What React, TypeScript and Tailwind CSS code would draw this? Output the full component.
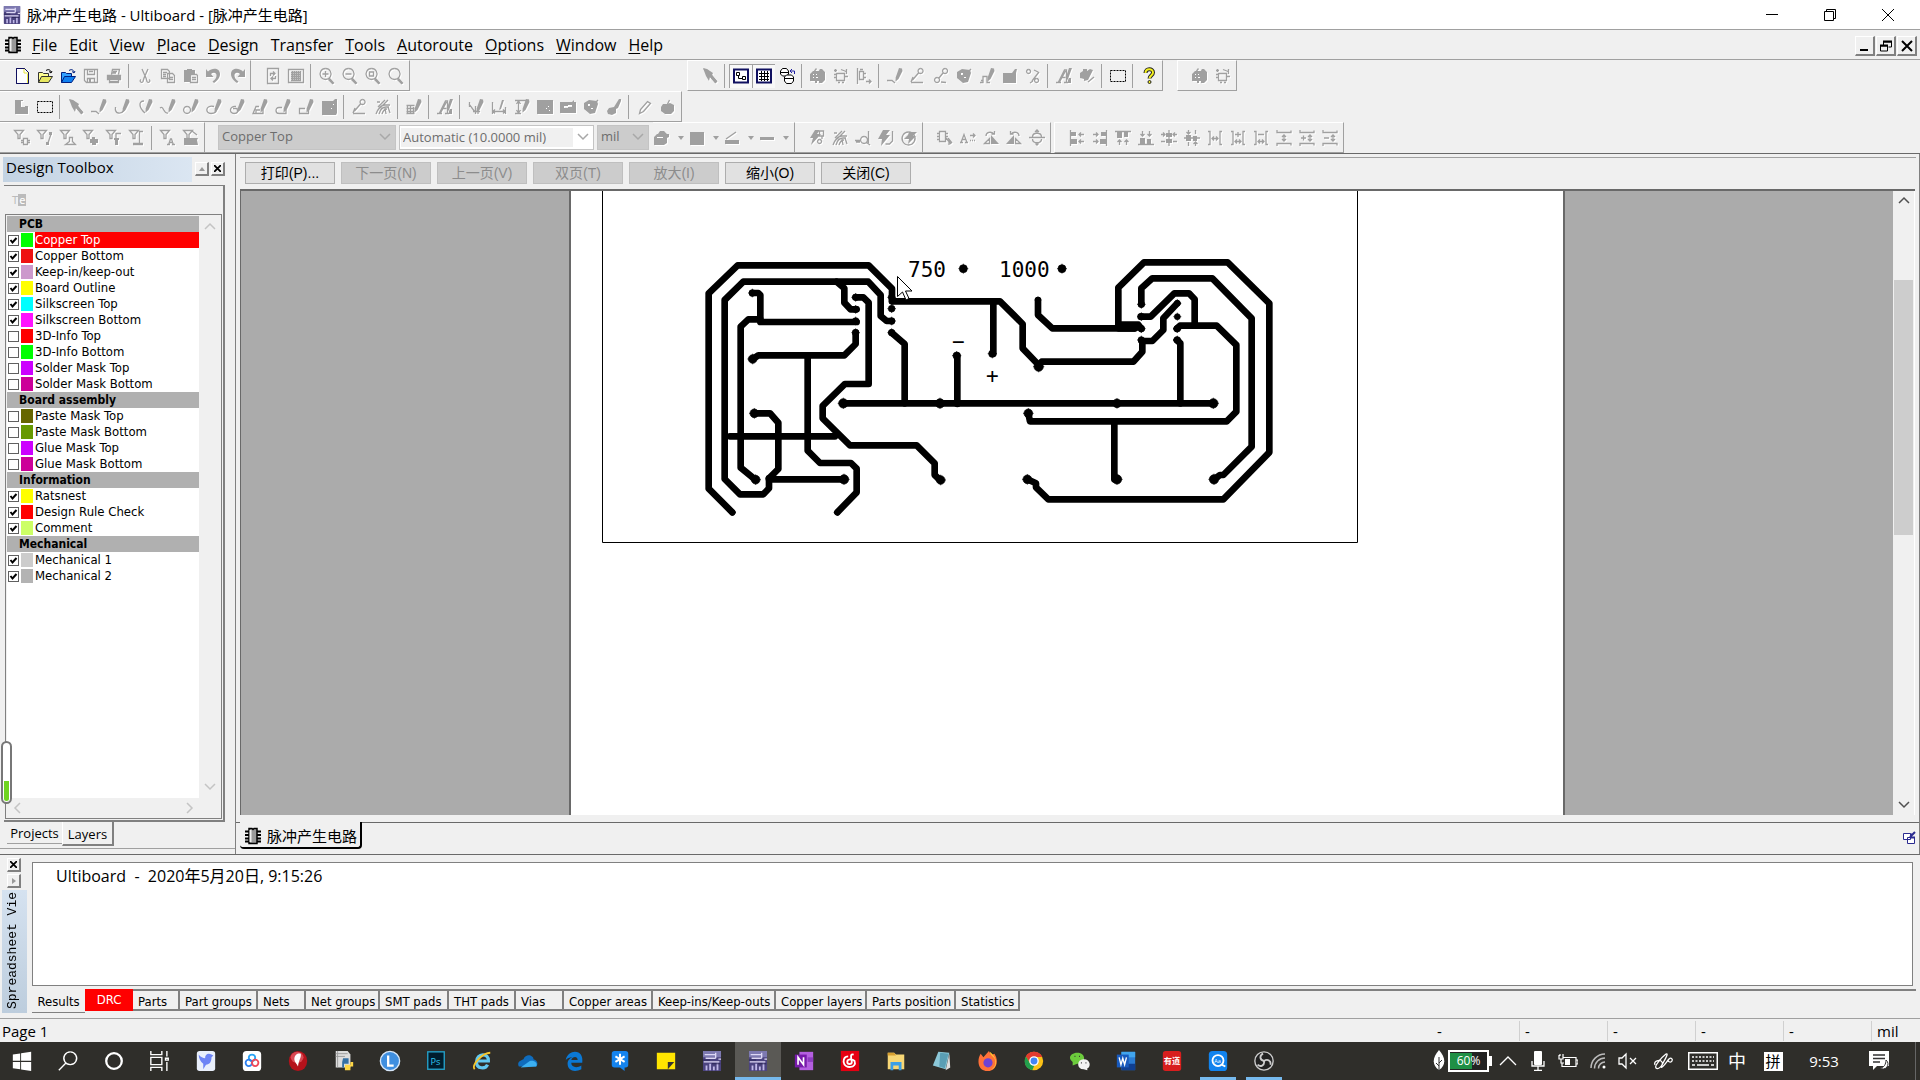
import { ReactNode } from "react";
import clsx from "clsx";

const UI = "font-['Open_Sans','Noto_Sans_CJK_SC',sans-serif]";
const TAHOMA = "font-['DejaVu_Sans_Condensed','DejaVu_Sans',sans-serif]";

// s = stroked outline, f = filled shape, both on a 16x16 grid
type Glyph = { s?: string; f?: string };

const PEN = "M12 0l3 .5 .5 2.500-4 8-3 2.500 .2-4z";
const FUNNEL = "M.5 .5h9l-3.500 4v4h-2v-4z";

const glyphs: Record<string, Glyph> = {
  save: { s: "M1.500 1.500h13v13h-11l-2-2zM4.500 1.500v5h7v-5M4.500 14.500v-4h7v4M6 3.500h4", f: "M6 11h2v3h-2z" },
  print: { s: "M5.500 6.500l1-5h7l-1 5M1.500 7.500h13v4h-13zM3.500 11.500v3h9v-3M7 3.500h4M6 5h4", f: "M2 8h12v3h-12zM4 13h8v1h-8z" },
  cut: { s: "M5 1l4 9M11 1l-4 9M4 11.500a1.500 1.500 0 1 0 2 2l1-3.500M12 11.500a1.500 1.500 0 1 1-2 2l-1-3.500" },
  copy: { s: "M1.500 1.500h6l2 2v7h-8zM7.500 5.500h5l2 2v7h-7zM3 4.500h4M3 6.500h3M3 8.500h3M9 9.500h4M9 11.500h4" },
  paste: { s: "M7.500 6.500h6l1 1v7h-7zM9 9.500h4M9 11.500h4", f: "M1 2h3v-1h5v1h3v4h-5v8h-6z" },
  undo: { f: "M0 1l2 2.500c5-4.500 12-3 12 2.500 0 4-3 7-6 9l-1.500-1.500c3-2 4-4 4-6 0-3-3-3.500-5.500-1.500l2.500 3h-7.500z" },
  redo: { f: "M16 1l-2 2.500c-5-4.500-12-3-12 2.500 0 4 3 7 6 9l1.500-1.500c-3-2-4-4-4-6 0-3 3-3.500 5.500-1.500l-2.500 3h7.500z" },
  refreshDoc: { s: "M2.500 .5h11v15h-11zM5.500 8v-2.500h4M8 3.500l2 2-2 2M10.500 8v2.500h-4M8 8.500l-2 2 2 2" },
  gridDoc: { s: "M.5 1.500h15v13h-15zM3 4.500h10M3 6.500h10M3 8.500h10M3 10.500h10M3 12.500h10M4.500 3v10M6.500 3v10M8.500 3v10M10.500 3v10M12.500 3v10" },
  zoomIn: { s: "M6.500 .5a5.500 5.500 0 1 0 .1 0M10.500 10.500l4.500 5M9.500 11.500l4.500 4.500M3.500 6h6M6.500 3v6" },
  zoomOut: { s: "M6.500 .5a5.500 5.500 0 1 0 .1 0M10.500 10.500l4.500 5M9.500 11.500l4.500 4.500M3.500 6h6" },
  zoomBox: { s: "M6.500 .5a5.500 5.500 0 1 0 .1 0M10.500 10.500l4.500 5M9.500 11.500l4.500 4.500M4.500 4h4v4h-4z" },
  zoom: { s: "M6.500 .5a5.500 5.500 0 1 0 .1 0M10.500 10.500l4.500 5M9.500 11.500l4.500 4.500" },
  arrow: { s: "M2 1l12 14M5 2l10 12M7 3.500l3 3", f: "M1 0l4 1 6 4-1 2 5 6-2 2-5-6-1 4-3-5z" },
  chip3d: { s: "M4.500 3l2-2.500M9.500 2l3 1", f: "M0 6l3-3h6l1-2h2l3 3v8l-3 3h-3v-2h-2v2h-2v-2h-5zM3 6v1h1v-1zM6 6v1h1v-1zM3 9v1h1v-1zM6 9v1h2v-1z" },
  chipCorner: { s: "M3.500 5.500h8v7h-8zM1 6.500h2M1 9.500h2M12 8.500h3M5 14.500h2M9 14.500h2M2.500 1v3M1 2.500h3M8 1.500l5 2M13.500 1v5" },
  alignChip: { s: "M1.500 0v16M3.500 3.500h4v8h-4zM8 5.500h2M8 9.500h2M10 13.500h5M13 11.500l2 2-2 2M4 1.500h3" },
  line: { s: "M0 12.500h5l3 2.500", f: PEN },
  arc: { s: "M1.500 8c-1 7 5 8 9 3", f: PEN },
  bezier: { s: "M7 2c-6 0-5 7 1 12", f: PEN },
  curve: { s: "M0 9c4-3 3 6 8 5", f: PEN },
  circle: { s: "M4 7.500a3.500 3.500 0 1 0 .1 0", f: PEN },
  ellipse: { s: "M8 7.500c-9-2-9 7-3 7 4 0 6-2 5-4", f: PEN },
  pie: { s: "M7 7.500c-7-1-7 7-2 7 4 0 4-2 3-5h-4", f: PEN },
  shape: { s: "M7 7.500h-3l-3 7h10v-4M4 14v-3h4", f: PEN },
  round: { s: "M7 8.500h-3c-4 0-4 6 0 6h7v-4", f: PEN },
  rect: { s: "M7 9.500h-5.500v5h9v-4", f: PEN },
  block: { f: "M1 2h11l2-2h2v14l-1 2h-14zM12 5v1h1v-1zM10 9v1h1v-1z" },
  via: { s: "M10.500 .5a2.500 2.500 0 1 0 .1 0M8.500 5l-6 7M1 14.500h12M3 9l-2 5" },
  via2: { s: "M12 .5a2.500 2.500 0 1 0 .1 0M10 5l-4 5M4 9.500a2.500 2.500 0 1 0 .1 0M8 14l5 .5" },
  poly: { s: "M13 3l2-2", f: "M1 4l5-3 8 1 1 3-3 9-5 1-6-5zM5 5v2h2v-2zM8 9v1h2v-1z" },
  pline: { s: "M1 14.500h3v-6h4v6h3M2 12.500h2", f: PEN },
  fillRect: { f: "M1 5h9l3-4h2l-1 4v10h-13z" },
  percent: { s: "M3.500 1.500a2 2 0 1 0 .1 0M11.500 10.500a2 2 0 1 0 .1 0M7 13l7-9M5 15l3-2M9 2l4 2" },
  letterA: { s: "M0 14.500h5M8 14.500h4M2.500 14l6-12h2v12M4.500 9.500h5M3.500 14l6-11", f: "M13 0h3l-4 11-2 2 0-4zM13 10h2v5h-3v-3z" },
  cubes: { s: "M9 14l6-5", f: "M1 5l3-2v-2h4v2l3-2 3 1-5 10-4 1v-2l-4-1z" },
  hatch: { s: "M.5 6.500h8M.5 9.500h8M.5 12.500h8M1.500 6v9M4.500 6v9M7.500 8v7M.5 14.500h8", f: PEN },
  burst: { s: "M1 15c2-5 5-9 9-9h5M4 15c1-4 3-7 7-7h3M7 15c1-3 2-5 5-5M3 8l7-7M5 9l8-8M2 3h3M13 8l2 6M10 9l1 6" },
  lpage: { f: "M1 1h8v1h-2v6h4v-1h3v8h-13z" },
  dimA: { s: "M1 5l6 8M1.500 3v5M7.500 7v8M5 12.500h7M10 9v6", f: PEN },
  dimB: { s: "M1.500 3v12M14.500 8v7M2 12.500h12M4 10.500l-2 2 2 2M12 10.500l2 2-2 2", f: "M11 1h2l-3 9-2 1z" },
  dimC: { s: "M1 1.500h14M1 14.500h6M4.500 2v12M2.500 5l2-3 2 3M2.500 11l2 3 2-3", f: PEN },
  padFill: { f: "M0 1h16v14h-16zM11 7v1h1v-1zM9 9v1h1v-1zM12 11v1h1v-1z" },
  cutFill: { f: "M0 3h12l2-2v2h2v11h-16zM4 7v2h4v-1h4v-2h-4v1z" },
  brush: { f: "M13 0h2v2l-3 7-2 1v4l-4 2-4-1-1-3 2-3 5-1z" },
  pen: { s: "M10.500 2.500l3 2-7 8-4 2 1-4z" },
  apple: { s: "M7.500 5l2-4", f: "M3 5h4l3-1 4 2v6l-3 3h-6l-4-3v-4z" },
  fChip: { s: "M9.500 8.500h4v6h-4zM7 10.500h2M7 12.500h2M14 10.500h2M14 12.500h2M.5 .5h9l-3.500 4v4h-2v-4z" },
  fLine: { s: FUNNEL + "M14 4l-3 9", f: "M12 2h3v3h-3zM9 12h3v3h-3z" },
  fShape: { s: FUNNEL + "M5.500 14.500h10l-3-3v-4h-3v4z" },
  fVia: { s: FUNNEL, f: "M9 7h3v2h3v4h-2v2h-4v-2h-2v-4h2z" },
  fNet: { s: FUNNEL + "M15 3.500h-5v5", f: "M8 8h5v2h-1v5h-3v-5h-1z" },
  fRoute: { s: FUNNEL + "M14 1.500h-3.500v13M4 14.500h10M4 13.500h10" },
  fText: { s: FUNNEL + "M8.500 15l2-6h1l2 6M9 12.500h4M7 14.500h3M12 14.500h3" },
  fMore: { s: FUNNEL + "M9 1l5 4", f: "M1 8h14l-1 2 1 5h-14z" },
  chipSmall: { f: "M0 7l3-3h1l2-3h4l3 3h2v3l-2 1v5l-3 2h-10zM3 7v1h6v-1z" },
  square: { f: "M1 2h14v13h-14z" },
  slope: { s: "M2 9l10-7", f: "M1 10h14v4h-14z" },
  dash: { f: "M1 7h14v3h-14z" },
  bolt: { f: "M6 0h5l-3 4h4l-10 11 2-7h-3z", s: "M10.500 1v5h4v-5h-4M10.500 9.500a2 2 0 1 0 .1 0M13 6v3" },
  boltBox: { f: "M5 0h7l-4 5h4l-9 11 1-7h-4z", s: "M14.500 1v10l-3 3h-4" },
  searchNet: { s: "M0 10.500h6M9 6.500a3.500 3.500 0 1 0 .1 0M13.500 1v12M11 12l4 3M1 12h4" },
  ringBolt: { s: "M7.500 2a6.500 6.500 0 1 0 .1 0", f: "M8 2h8l-4 4h3l-8 8 1-5h-5l4-4z" },
  selChip: { s: "M2.500 1.500h6v10h-6zM0 3.500h2M0 6.500h2M0 9.500h2M9 3.500h2M9 6.500h2M9 8l5 6M11 8l4 5M12 15v-5" },
  aPlus: { s: "M1 12.500l3-8 3 8M2 9.500h4M0 12.500h3M5 12.500h3M10 5.500h5M10 10.500h1M12 10.500h1M14 10.500h1M13 3.500l2 2-2 2" },
  rotR: { s: "M3 6c0-4 5-5 8-2M11.500 1v3h-3M1.500 13.500l5-5v5z", f: "M8 14v-9l8 9z" },
  rotL: { s: "M13 6c0-4-5-5-8-2M4.500 1v3h3M14.500 13.500l-5-5v5z", f: "M8 14v-9l-8 9z" },
  flip: { s: "M0 7.500h16M3.500 7c0-5 9-5 9 0M3.500 9c0 5 9 5 9 0M8 0v3M8 12v4M6 13l2 2 2-2M6 2l2-2 2 2" },
  alL: { s: "M1.500 0v16M10 4.500h5M12 2.500l-2 2 2 2M10 11.500h5M12 9.500l-2 2 2 2", f: "M2 2h5v4h-5zM2 9h6v5h-6z" },
  alR: { s: "M14.500 0v16M1 4.500h5M4 2.500l2 2-2 2M1 11.500h5M4 9.500l2 2-2 2", f: "M9 2h5v4h-5zM8 9h6v5h-6z" },
  alT: { s: "M0 1.500h16M4.500 15v-5M2.500 12l2-2 2 2M11.500 15v-5M9.500 12l2-2 2 2", f: "M2 2h5v6h-5zM9 2h4v5h-4z" },
  alB: { s: "M0 14.500h16M4.500 1v5M2.500 4l2 2 2-2M11.500 1v5M9.500 4l2 2 2-2", f: "M2 8h5v6h-5zM9 9h4v5h-4z" },
  cenH: { s: "M8 0v16M0 4.500h4M12 4.500h4M0 11.500h4M12 11.500h4M2 2.500l2 2-2 2M14 2.500l-2 2 2 2", f: "M5 3h6v4h-6zM5 9h6v4h-6z" },
  cenV: { s: "M0 8h16M4.500 0v4M11.500 0v4M4.500 12v4M11.500 12v4M2.500 2l2 2 2-2M9.500 14l2-2 2 2", f: "M2 5h5v6h-5zM9 6h4v5h-4z" },
  spH: { s: "M1 1.500h2v13h-2M15 1.500h-2v13h2M5 8.500h6M7 6.500l-2 2 2 2M9 6.500l2 2-2 2" },
  spHp: { s: "M1 1.500h2v13h-2M15 1.500h-2v13h2M5 11.500h6M7 9.500l-2 2 2 2M9 9.500l2 2-2 2M5 4.500h6M8 2v5" },
  spHm: { s: "M1 1.500h2v13h-2M15 1.500h-2v13h2M5 11.500h6M7 9.500l-2 2 2 2M9 9.500l2 2-2 2M5 4.500h6" },
  spV: { s: "M1 0v2.500h14v-2M1 16v-2.500h14v2M8 5v6M6 7l2-2 2 2M6 9l2 2 2-2" },
  spVp: { s: "M1 0v2.500h14v-2M1 16v-2.500h14v2M11 5v6M9 7l2-2 2 2M9 9l2 2 2-2M2 8h5M4.500 5.500v5" },
  spVm: { s: "M1 0v2.500h14v-2M1 16v-2.500h14v2M11 5v6M9 7l2-2 2 2M9 9l2 2 2-2M2 8h5" },
};

// The few tools that are enabled keep their colours
const live: Record<string, ReactNode> = {
  newDoc: <><path d="M2.500 .5h8l4 4v11h-12z" fill="#fff" stroke="#222" /><path d="M10 1v4h4M13.500 6v9" stroke="#e8e840" fill="none" /><path d="M2.500 .5h8l4 4v11h-12z" fill="none" stroke="#101060" /></>,
  open: <><path d="M1.500 14.500v-10h4l1 1h5v3" fill="#ffff90" stroke="#333" /><path d="M1.500 14.500l3-6h11l-4 6z" fill="#e8e860" stroke="#333" /><path d="M9 2.500c3-2 5 0 5 2M12 3.500l2 1.500 1-2" fill="none" stroke="#000" /></>,
  openBlue: <><path d="M1.500 14.500v-10h4l1 1h5v3" fill="#30a0ff" stroke="#002080" /><path d="M1.500 14.500l3-6h11l-4 6z" fill="#1080f0" stroke="#002080" /><path d="M9 2.500c3-2 5 0 5 2M12 3.500l2 1.500 1-2" fill="none" stroke="#002080" /></>,
  marquee: <path d="M.5 2.500h15v11h-15z" fill="none" stroke="#000" strokeDasharray="2 1" />,
  tree: <><path d="M1 1.500h14v13h-14z" fill="#fff" stroke="#101060" strokeWidth="2" /><path d="M3.500 4.500h3v3h-3zM9.500 8.500h3v3h-3zM5.500 8v2.500h4" fill="none" stroke="#000" /></>,
  sheet: <><path d="M1 1.500h14v13h-14z" fill="#fff" stroke="#101060" strokeWidth="2" /><path d="M3 5.500h10M3 8.500h10M3 11.500h10M5.500 3v10M8.500 3v10M11.500 3v10" stroke="#000" /></>,
  cylinders: <><path d="M1.500 3l2-2.500h4l2 2.500v3l-2 2h-4l-2-2z" fill="#fff" stroke="#000" /><path d="M2 4.500h7" stroke="#000" /><path d="M5.500 9l2-2h5l2 2v4l-2 2.500h-5l-2-2.500z" fill="#fff" stroke="#000" /><path d="M6 10.500h8" stroke="#000" /><path d="M15.500 6v-3h-4M13 1l-2 2 2 2" fill="none" stroke="#2020a0" /></>,
  help: <><path d="M4.500 5c0-5 7.500-5 7.500-.5 0 3-3.500 3-3.500 6" fill="none" stroke="#222" strokeWidth="4" /><path d="M4.500 5c0-5 7.500-5 7.500-.5 0 3-3.500 3-3.500 6" fill="none" stroke="#f4f020" strokeWidth="2" /><circle cx="8.500" cy="14" r="1.500" fill="#f4f020" stroke="#222" /></>,
};

function Icon({ name }: { name: string }) {
  if (live[name]) {
    return <svg viewBox="0 0 16 16" className="h-4 w-4 overflow-visible">{live[name]}</svg>;
  }
  const g = glyphs[name];
  return (
    <svg viewBox="0 0 16 16" className="h-4 w-4 overflow-visible drop-shadow-[1px_1px_0_#fff]">
      {g.s && <path d={g.s} fill="none" stroke="#a0a0a0" strokeWidth="1.3" />}
      {g.f && <path d={g.f} fill="#a0a0a0" fillRule="evenodd" />}
    </svg>
  );
}

// "|" puts a separator, a leading "*" a pressed button
function Tools({ items }: { items: string }) {
  return (
    <>
      {items.split(" ").map((item, i) =>
        item === "|" ? (
          <span key={i} className="mr-1 ml-[3px] h-6 w-px bg-[#a0a0a0]" />
        ) : (
          <button
            key={i}
            title={item.replace("*", "")}
            className={clsx(
              "flex w-[23px] items-center justify-center",
              item[0] === "*" ? "h-6 border-t border-l border-[#a0a0a0] bg-[#f8f8f8]" : "h-full"
            )}
          >
            <Icon name={item.replace("*", "")} />
          </button>
        )
      )}
    </>
  );
}

function Group({ children, className }: { children: ReactNode; className?: string }) {
  return (
    <div className={clsx("flex h-[31px] items-center border-t border-r border-b border-t-white border-r-[#a0a0a0] border-b-[#a0a0a0] pr-[2px] pl-[10px]", className)}>
      {children}
    </div>
  );
}

function Chevron({ className, d = "M1 3l5 5 5-5" }: { className?: string; d?: string }) {
  return (
    <svg viewBox="0 0 12 12" className={clsx("h-3 w-3", className)}>
      <path d={d} fill="none" stroke="currentColor" strokeWidth="1.5" />
    </svg>
  );
}

function Combo({ label, value, className, field }: { label: string; value: string; className: string; field?: string }) {
  return (
    <label className={clsx("relative flex h-[25px] items-center border border-[#c4c4c4] pl-px", className)}>
      <select aria-label={label} className={clsx("appearance-none px-[2px] text-[13px] text-[#6d6d6d]", UI, field ?? "h-full w-full")}>
        <option>{value}</option>
      </select>
      <Chevron className="pointer-events-none absolute right-1 text-[#a8a8a8]" />
    </label>
  );
}

function Drop({ name }: { name: string }) {
  return (
    <button title={name} className="flex h-full w-[35px] items-center gap-1">
      <Icon name={name} />
      <svg viewBox="0 0 6 4" className="ml-1 h-1 w-[6px]"><path d="M0 0h6l-3 4z" fill="#a0a0a0" /></svg>
    </button>
  );
}

function Chip() {
  return (
    <svg viewBox="0 0 16 16" className="h-[18px] w-4">
      <path d="M4 .5h3l1 1 1-1h3v15h-8z" fill="#9a9a9a" stroke="#000" strokeWidth="1.500" />
      <path d="M5.500 2v12" stroke="#eee" strokeWidth="2" />
      <path d="M0 3.500h4M0 7h4M0 10.500h4M0 13.500h4M12 3.500h4M12 7h4M12 10.500h4M12 13.500h4" stroke="#000" strokeWidth="2" />
    </svg>
  );
}

function AppLogo({ className }: { className?: string }) {
  return (
    <svg viewBox="0 0 20 22" width="20" height="22" className={className}>
      <rect width="20" height="22" rx="1" fill="#4c4480" />
      <path d="M0 0h20v7h-20z" fill="#7d79b0" />
      <path d="M2 4h12M3 8h11M1 12h17M14 2v6M17 9h3" stroke="#ddd8f4" strokeWidth="1.500" />
      <path d="M4 21v-5M8 21v-7M12 21v-4M16 21v-8" stroke="#c0b8e8" strokeWidth="2" />
      <path d="M0 10h8M10 14h9" stroke="#292454" strokeWidth="1" />
    </svg>
  );
}

const menus = [
  ["", "F", "ile"], ["", "E", "dit"], ["", "V", "iew"], ["", "P", "lace"], ["", "D", "esign"],
  ["Tra", "n", "sfer"], ["", "T", "ools"], ["", "A", "utoroute"], ["", "O", "ptions"], ["", "W", "indow"], ["", "H", "elp"],
];

function TitleBar() {
  return (
    <header className="flex h-[30px] items-center border-b border-[#a0a0a0] bg-white pl-[3px]">
      <AppLogo className="h-[18px] w-[18px]" />
      <h1 className={clsx("ml-[6px] text-[15px] leading-5", UI)}>脉冲产生电路 - Ultiboard - [脉冲产生电路]</h1>
      <div className="mr-[3px] ml-auto flex h-full">
        <button title="Minimize" className="flex w-[58px] items-center justify-center"><svg className="h-3 w-3" viewBox="0 0 12 12"><path d="M0 5.500h12" stroke="#000" /></svg></button>
        <button title="Restore" className="flex w-[58px] items-center justify-center"><svg className="h-3 w-3" viewBox="0 0 12 12"><path d="M.5 2.500h9v9h-9zM2.500 2.500v-2h9v9h-2" fill="none" stroke="#000" /></svg></button>
        <button title="Close" className="flex w-[58px] items-center justify-center"><svg className="h-3 w-3" viewBox="0 0 12 12"><path d="M0 0l12 12M12 0l-12 12" stroke="#000" /></svg></button>
      </div>
    </header>
  );
}

const bevel = "flex items-center justify-center border-t border-l border-r-2 border-b-2 border-t-white border-l-white border-r-[#808080] border-b-[#808080]";

function MenuBar() {
  return (
    <nav className="flex h-[30px] items-center border-b border-[#a0a0a0] pr-[3px] pl-[5px]">
      <Chip />
      <div className={clsx("ml-[11px] flex gap-3 text-[16px] leading-5", UI)}>
        {menus.map(([a, key, b]) => (
          <button key={b}>{a}<span className="underline underline-offset-2">{key}</span>{b}</button>
        ))}
      </div>
      <div className="mt-[3px] ml-auto flex gap-px">
        <button title="Minimize document" className={clsx("h-5 w-5", bevel)}><svg className="h-3 w-3" viewBox="0 0 12 12"><path d="M1 10h8" stroke="#000" strokeWidth="2" /></svg></button>
        <button title="Restore document" className={clsx("h-5 w-5", bevel)}><svg className="h-3 w-3" viewBox="0 0 12 12"><path d="M.5 6h7v5h-7zM3.500 5v-3h8v5h-3" fill="none" stroke="#000" /><path d="M0 5.500h8M3 1.500h9" stroke="#000" strokeWidth="2" /></svg></button>
        <button title="Close document" className={clsx("h-5 w-5", bevel)}><svg className="h-3 w-3" viewBox="0 0 12 12"><path d="M1 1l10 10M11 1l-10 10" stroke="#000" strokeWidth="2" /></svg></button>
      </div>
    </nav>
  );
}

function Toolbars() {
  return (
    <div>
      <div className="flex">
        <Group><Tools items="newDoc open openBlue save print | cut copy paste undo redo" /></Group>
        <Group><Tools items="refreshDoc gridDoc | zoomIn zoomOut zoomBox zoom" /></Group>
        <Group className="ml-[277px] border-l border-l-white">
          <Tools items="arrow | *tree *sheet cylinders | chip3d chipCorner alignChip | line via via2 poly pline fillRect percent | letterA cubes | marquee | help" />
        </Group>
        <Group className="ml-[14px] border-l border-l-white"><Tools items="chip3d chipCorner" /></Group>
      </div>
      <div className="flex">
        <Group>
          <Tools items="lpage marquee | arrow line arc bezier curve circle ellipse pie shape round rect block | via burst | hatch | letterA | dimA dimB dimC padFill cutFill poly brush | pen apple" />
        </Group>
      </div>
      <div className="flex">
        <Group><Tools items="fChip fLine fShape fVia fNet fRoute | fText fMore" /></Group>
        <div className="flex h-[31px] items-center gap-[3px] border-b border-[#a0a0a0] pr-1 pl-[13px]">
          <Combo label="Layer" value="Copper Top" className="w-[178px] bg-[#ccc]" />
          <Combo label="Line width" value="Automatic (10.0000 mil)" className="w-[195px] bg-white" field="h-[19px] w-[172px] bg-[#f0f0f0]" />
          <Combo label="Unit" value="mil" className="w-[52px] bg-[#ccc]" />
        </div>
        <Group className="!pr-0 !pl-[1px]"><Drop name="chipSmall" /><Drop name="square" /><Drop name="slope" /><Drop name="dash" /></Group>
        <Group><Tools items="bolt burst searchNet boltBox ringBolt" /></Group>
        <Group><Tools items="selChip aPlus rotR rotL flip" /></Group>
        <Group className="ml-[3px] border-l border-l-white"><Tools items="alL alR alT alB cenH cenV spH spHp spHm spV spVp spVm" /></Group>
      </div>
    </div>
  );
}

const layers: { title: string; rows: [string, string, boolean][] }[] = [
  {
    title: "PCB",
    rows: [
      ["Copper Top", "bg-[#00ff00]", true],
      ["Copper Bottom", "bg-[#ee1111]", true],
      ["Keep-in/keep-out", "bg-[#cc99cc]", true],
      ["Board Outline", "bg-[#ffff00]", true],
      ["Silkscreen Top", "bg-[#00ffff]", true],
      ["Silkscreen Bottom", "bg-[#ff11ff]", true],
      ["3D-Info Top", "bg-[#ff0000]", false],
      ["3D-Info Bottom", "bg-[#00ff00]", false],
      ["Solder Mask Top", "bg-[#cc00ff]", false],
      ["Solder Mask Bottom", "bg-[#cc0099]", false],
    ],
  },
  {
    title: "Board assembly",
    rows: [
      ["Paste Mask Top", "bg-[#666600]", false],
      ["Paste Mask Bottom", "bg-[#669900]", false],
      ["Glue Mask Top", "bg-[#cc00ff]", false],
      ["Glue Mask Bottom", "bg-[#cc0099]", false],
    ],
  },
  {
    title: "Information",
    rows: [
      ["Ratsnest", "bg-[#ffff00]", true],
      ["Design Rule Check", "bg-[#ff0000]", true],
      ["Comment", "bg-[#ccff66]", true],
    ],
  },
  {
    title: "Mechanical",
    rows: [
      ["Mechanical 1", "bg-[#cccccc]", true],
      ["Mechanical 2", "bg-[#b3b3b3]", true],
    ],
  },
];

function LayerRow({ name, color, on }: { name: string; color: string; on: boolean }) {
  const selected = name === "Copper Top";
  return (
    <label className="flex h-4 items-center pl-[1px]">
      <span className="relative flex h-[11px] w-[11px]">
        <input type="checkbox" defaultChecked={on} className="h-full w-full appearance-none border border-[#606060] bg-white" />
        {on && (
          <svg viewBox="0 0 11 11" className="pointer-events-none absolute inset-0">
            <path d="M2.500 5l2 2.500 4-4.500" fill="none" stroke="#000" strokeWidth="2" />
          </svg>
        )}
      </span>
      <span className={clsx("ml-[2px] h-[14px] w-3", color)} />
      <span className={clsx("ml-[2px] h-4 flex-1 text-[13px] leading-4", selected && "bg-[#ff0000] text-white")}>{name}</span>
    </label>
  );
}

function DesignToolbox() {
  return (
    <aside className="relative flex w-[236px] flex-col border-r border-[#808080] pt-[3px]">
      <div className="flex h-[25px] items-start pl-[3px]">
        <h2 className={clsx("h-full w-[189px] bg-linear-to-r from-[#c3d3e3] to-[#dbe6f2] pl-[3px] text-[15px] leading-[20px]", UI)}>Design Toolbox</h2>
        <button title="Roll up" className={clsx("mt-[5px] ml-[3px] h-[14px] w-[14px]", bevel)}><svg viewBox="0 0 6 4" className="h-1 w-[6px]"><path d="M0 4h6l-3-4z" fill="#999" /></svg></button>
        <button title="Close toolbox" className={clsx("mt-[5px] ml-[2px] h-[14px] w-[14px]", bevel)}><svg viewBox="0 0 8 8" className="h-[7px] w-[7px]"><path d="M0 0l8 8M8 0l-8 8" stroke="#000" strokeWidth="2" /></svg></button>
      </div>
      <div className="mt-[3px] mr-[10px] ml-1 flex flex-1 flex-col border-t border-r-2 border-b-2 border-[#808080] pr-[1px] pb-[1px] pl-px">
        <div className="flex h-7 items-center pl-[7px] text-[11px] leading-3 text-[#bbb]">
          T<span className="bg-[#bbb] px-[1px] text-white">e</span>
        </div>
        <div className="flex flex-1 flex-col border border-[#808080] pt-px pl-px">
          <div className="flex flex-1">
            <div className={clsx("w-[192px] bg-white", TAHOMA)}>
              {layers.map((group) => (
                <section key={group.title}>
                  <h3 className="h-4 bg-[#b0b0b0] pl-3 text-[12px] leading-4 font-bold">{group.title}</h3>
                  {group.rows.map(([name, color, on]) => (
                    <LayerRow key={name} name={name} color={color} on={on} />
                  ))}
                </section>
              ))}
            </div>
            <div className="flex flex-1 flex-col items-center justify-between py-[5px] text-[#c4c4c4]">
              <Chevron d="M1 8l5-5 5 5" />
              <Chevron />
            </div>
          </div>
          <div className="flex h-5 w-[193px] items-center justify-between px-[5px] text-[#c4c4c4]">
            <Chevron d="M8 1l-5 5 5 5" />
            <Chevron d="M4 1l5 5-5 5" />
          </div>
        </div>
      </div>
      <div className={clsx("flex h-[26px] items-start pl-[7px] text-[13px]", UI)}>
        <button className="h-[22px] w-[55px] border-b border-[#a0a0a0] leading-[22px]">Projects</button>
        <button className="h-6 w-[52px] border-r-2 border-b-2 border-l border-r-[#808080] border-b-[#808080] border-l-white leading-6">Layers</button>
      </div>
      <div className="h-[6px] border-t border-[#a0a0a0]" />
      {/* floating gauge */}
      <div className="absolute bottom-[50px] left-[1px] flex h-[63px] w-[11px] flex-col justify-end rounded-full border-2 border-[#777] bg-white p-px">
        <div className="h-5 rounded-b-full bg-[#6fd41f]" />
      </div>
    </aside>
  );
}

// [x, y, radius] on the same grid as the traces
const padsLeft = [
  [187, 159, 10], [188, 357, 13], [193, 520, 13], [460, 490, 14], [750, 490, 14], [462, 718, 14], [197, 719, 13],
  [752, 720, 13], [497, 172, 10], [497, 208, 10], [497, 243, 10], [497, 278, 10], [605, 172, 10], [605, 206, 10],
  [605, 243, 10], [605, 278, 10], [800, 347, 11], [907, 341, 11], [820, 86, 12], [127, 817, 8], [442, 817, 8],
];
const padsRight = [
  [176, 380, 14], [145, 520, 13], [142, 718, 13], [411, 718, 14], [702, 718, 14], [411, 490, 13], [700, 490, 14],
  [484, 193, 10], [484, 230, 10], [484, 266, 10], [484, 300, 10], [592, 190, 9], [592, 230, 9], [592, 266, 10],
  [592, 300, 10], [174, 180, 8], [246, 86, 12],
];

const tracesLeft = [
  "M127 817L56 746V160L143 76H536L606 146V184",
  "M237 715V745L220 763H150L104 717V180L160 125H535L572 165V228L590 243H605",
  "M440 125L463 145V188L482 208H500",
  "M187 159H205L211 165V246H500",
  "M195 718L152 683V260L175 238H211",
  "M497 172H520L536 188V432H465L398 498V535L480 616H680L734 670V705L750 720",
  "M497 278V312L463 346H205L188 357",
  "M353 346V632L390 669H483L500 686V757L442 817",
  "M193 520H240L265 548V687L237 715",
  "M120 589H435M237 718H462",
  "M606 184H930L998 252V325L1046 375M910 184V341",
  "M605 278L644 312V490M802 347V492",
  "M460 490H1570",
];
const tracesRight = [
  "M465 265H415V143L492 67H743L868 190V637L730 778H205L168 742V730L142 718",
  "M484 193V145L517 115H697L815 235V620L730 705H720L702 718",
  "M482 230H512L583 160H627L644 178V255",
  "M592 190L550 235V270L517 303H485M487 303V335L460 365H185L176 375",
  "M590 266L600 257H710L769 315V515L740 544H150L145 520",
  "M590 300L601 310V490",
  "M174 180V225L217 265H465M415 254H475L484 266",
  "M403 544V718H411",
];

function Traces({ x, paths, pads }: { x: number; paths: string[]; pads: number[][] }) {
  return (
    <g transform={`translate(${x} 240) scale(.33333)`} stroke="#000" strokeLinejoin="round">
      {paths.map((d) => <path key={d} d={d} fill="none" strokeWidth="20" strokeLinecap="round" />)}
      {pads.map(([cx, cy, r]) => (
        <g key={`${cx}-${cy}`} strokeWidth="2">
          <circle cx={cx} cy={cy} r={r} />
          <path d={`M${cx - r - 3} ${cy}h${2 * r + 6}M${cx} ${cy - r - 3}v${2 * r + 6}`} />
        </g>
      ))}
    </g>
  );
}

function Board() {
  return (
    <svg viewBox="602 191 756 352" className="ml-[31px] h-[352px] w-[756px]">
      <path d="M602.500 191V542.500H1357.500V191" fill="none" stroke="#000" />
      <Traces x={690} paths={tracesLeft} pads={padsLeft} />
      <Traces x={980} paths={tracesRight} pads={padsRight} />
      <g className="font-['DejaVu_Sans_Mono',monospace]" fontSize="21">
        <text x="908" y="277">750</text>
        <text x="999" y="277">1000</text>
        <text x="952" y="349">−</text>
        <text x="986" y="383">+</text>
      </g>
      <path d="M897.500 276.500v20l5-4.500 3.500 8 3-1.500-3.500-7.500h6.500z" fill="#fff" stroke="#000" />
    </svg>
  );
}

const previewButtons: [string, boolean][] = [
  ["打印(P)...", true], ["下一页(N)", false], ["上一页(V)", false], ["双页(T)", false],
  ["放大(I)", false], ["缩小(O)", true], ["关闭(C)", true],
];

function Preview() {
  return (
    <main className="flex min-w-0 flex-1 flex-col border-r border-[#808080] pt-[3px] pl-1">
      <div className="mr-[3px] flex h-8 items-start gap-[6px] border-t border-[#a0a0a0] pt-1 pl-[5px] font-['Liberation_Sans','Noto_Sans_CJK_SC',sans-serif] text-[14px]">
        {previewButtons.map(([label, enabled]) => (
          <button
            key={label}
            disabled={!enabled}
            className={clsx("h-[22px] w-[90px] border leading-5", enabled ? "border-[#adadad] bg-[#e1e1e1]" : "border-[#bfbfbf] bg-[#ccc] text-[#8c8c8c]")}
          >
            {label}
          </button>
        ))}
      </div>
      <div className="mr-1 flex flex-1 border-t-2 border-l border-[#696969]">
        <div className="flex flex-1 justify-center bg-[#ababab]">
          <div className="w-[60.3%] border-x-2 border-[#696969] bg-white"><Board /></div>
        </div>
        <div className="flex w-[22px] flex-col items-center border-r border-white py-1 text-[#505050]">
          <Chevron d="M1 8l5-5 5 5" />
          <div className="mt-[73px] h-[255px] w-[19px] bg-[#cdcdcd]" />
          <Chevron className="mt-auto" />
        </div>
      </div>
      <div className="-ml-1 flex h-[39px] items-start pt-[7px]">
        <div className="flex h-8 flex-1 items-start border-t border-[#696969] pl-1">
          <button className={clsx("-mt-px flex h-[27px] w-[122px] items-center gap-[6px] rounded-b-sm border-r-2 border-b-2 border-black bg-[#f0f0f0] pt-[3px] pl-[5px] text-[15px] leading-5", UI)}>
            <Chip />脉冲产生电路
          </button>
          <svg viewBox="0 0 14 14" className="mt-2 mr-[2px] ml-auto h-[14px] w-[14px]">
            <path d="M.5 2.500h7v6h-7zM4.500 6.500h7v6h-7z" fill="#fff" stroke="#2a2a90" />
            <path d="M7 6l5-5M8 2.500v4h4" fill="none" stroke="#2a2a90" strokeWidth="2" />
          </svg>
        </div>
      </div>
    </main>
  );
}

const sheetTabs = [
  ["Results", "w-[53px]"], ["DRC", "w-[48px]"], ["Parts", "w-[47px]"], ["Part groups", "w-[78px]"], ["Nets", "w-[48px]"],
  ["Net groups", "w-[74px]"], ["SMT pads", "w-[69px]"], ["THT pads", "w-[67px]"], ["Vias", "w-[48px]"],
  ["Copper areas", "w-[89px]"], ["Keep-ins/Keep-outs", "w-[123px]"], ["Copper layers", "w-[91px]"],
  ["Parts position", "w-[89px]"], ["Statistics", "w-[64px]"],
];

function SpreadsheetView() {
  return (
    <section className="flex h-[164px] border-t border-[#696969]">
      <div className="flex w-8 flex-col pt-[3px] pl-[2px]">
        <button title="Close view" className={clsx("ml-[5px] h-[14px] w-[14px]", bevel)}><svg viewBox="0 0 8 8" className="h-[7px] w-[7px]"><path d="M0 0l8 8M8 0l-8 8" stroke="#000" strokeWidth="2" /></svg></button>
        <button title="Roll up" className={clsx("mt-[2px] ml-[5px] h-[14px] w-[14px]", bevel)}><svg viewBox="0 0 4 6" className="h-[6px] w-1"><path d="M0 0v6l4-3z" fill="#999" /></svg></button>
        <div className="mt-[2px] flex h-[123px] w-[25px] rotate-180 items-center overflow-hidden bg-linear-to-b from-[#bdcddd] to-[#d5e2f0] pt-1 pl-1 font-['Liberation_Mono',monospace] text-[13px] whitespace-nowrap [writing-mode:vertical-rl]">
          Spreadsheet Vie
        </div>
      </div>
      <div className="flex flex-1 flex-col pt-[7px]">
        <div className={clsx("mr-[7px] h-[124px] border border-[#808080] bg-white pt-[3px] pl-[23px] text-[16px] leading-5 whitespace-pre", UI)}>
          {"Ultiboard  -  2020年5月20日, 9:15:26"}
        </div>
        <div className={clsx("mt-[3px] mr-1 flex text-[13px]", TAHOMA)}>
          {sheetTabs.map(([label, width]) => (
            <button
              key={label}
              className={clsx(
                "leading-[22px] whitespace-nowrap",
                width,
                label === "Results" && "h-6 border-b border-[#808080] pt-[2px]",
                label === "DRC" && "h-[22px] bg-[#ff0000] text-white",
                label !== "Results" && label !== "DRC" && "h-[22px] border-t-2 border-r-2 border-b-2 border-[#808080] pl-[5px] text-left leading-[17px]"
              )}
            >
              {label}
            </button>
          ))}
          <div className="flex-1 border-t-2 border-[#808080]" />
        </div>
      </div>
    </section>
  );
}

function StatusBar() {
  return (
    <footer className={clsx("flex h-6 items-center border-t border-[#a0a0a0] pl-[2px] text-[15px] leading-5", UI)}>
      <span className="flex-1">Page 1</span>
      {[1, 2, 3, 4, 5].map((n) => <span key={n} className="w-[88px] border-r border-[#d0d0d0] pl-[5px]">-</span>)}
      <span className="w-12 pl-[5px]">mil</span>
    </footer>
  );
}

const apps: [string, ReactNode][] = [
  ["Start", <path d="M2 5l8-1.200v8h-8zM11 3.600l11-1.600v9.800h-11zM2 13h8v8l-8-1.200zM11 13h11v10l-11-1.600z" fill="#fff" />],
  ["Search", <path d="M14.500 2a7 7 0 1 1-.1 0M10 14l-8 8" fill="none" stroke="#fff" strokeWidth="1.500" />],
  ["Cortana", <circle cx="12" cy="12" r="8.500" fill="none" stroke="#fff" strokeWidth="2.500" />],
  ["Task View", <path d="M2 1v4h12v-4M2 8h12v8h-12zM2 23v-4h12v4M19.500 1v6M19.500 13v10M18 9h3v2h-3z" fill="none" stroke="#fff" strokeWidth="1.500" />],
  ["Xunlei", <><rect x="2" y="1" width="20" height="22" rx="3" fill="#e9effb" /><path d="M4 5c2 3 5 4 7 4 0-4 3-6 7-4l2 1-2 2c0 5-2 8-6 8l-3 5v-6c-3-2-5-6-5-10z" fill="#6d84f5" /></>],
  ["Netdisk", <><rect x="2" y="1" width="20" height="22" rx="4" fill="#fff" /><circle cx="12" cy="8.500" r="3.500" fill="none" stroke="#2aa4f4" strokeWidth="2" /><circle cx="8.500" cy="14" r="3.500" fill="none" stroke="#2d80f0" strokeWidth="2" /><circle cx="15.500" cy="14" r="3.500" fill="none" stroke="#f04858" strokeWidth="2" /></>],
  ["Creative", <><ellipse cx="12" cy="12" rx="10" ry="11" fill="#b5121b" /><ellipse cx="11" cy="8" rx="7" ry="6" fill="#d84a54" /><path d="M8 10c0-5 4-7 7-6 1 4-2 6-3 14-1-3-4-5-4-8z" fill="#fff" /></>],
  ["Python", <><path d="M3 1h13l3 4v14h-16z" fill="#ddd" /><path d="M5 1v18M3 4h13M3 7h10" stroke="#999" /><path d="M11 9h6v6h-5v4h-2v-6z" fill="#3470a4" /><path d="M13 22h6v-4h3v-5h-3v3h-6z" fill="#ffd745" /></>],
  ["Lens", <><circle cx="12" cy="12" r="10.500" fill="#3f8fe0" stroke="#d8e8fa" strokeWidth="1.500" /><path d="M10 6v11h6" fill="none" stroke="#fff" strokeWidth="2.500" /></>],
  ["Photoshop", <><rect x="3" y="2" width="18" height="19" fill="#001d2d" stroke="#25a0c8" strokeWidth="1.500" /><text x="6" y="16" fontSize="10" fill="#31c5f0">Ps</text></>],
  ["Internet Explorer", <><path d="M7 12h12c1-9-13-9-13 1 0 8 10 8 12 3" fill="none" stroke="#62c8f0" strokeWidth="3.500" /><path d="M4 21c-4-5 9-18 17-18" fill="none" stroke="#f5c52c" strokeWidth="2" /></>],
  ["OneDrive", <><path d="M2 18c-3-6 4-7 5-8 3-7 11-4 11 0 5 1 5 6 3 8z" fill="#0f6cbd" /><path d="M4 19l10-7c5-1 9 2 7 6z" fill="#3cb0f2" /></>],
  ["Edge", <path d="M3 11c1-6 6-9 10-9 6 0 9 5 8 12h-12c0 5 6 6 11 3v4c-8 4-15 1-15-6 0-4 3-6 5-7-3 0-5 1-7 3zM9 11h7c0-5-6-4-7 0z" fill="#0b78d4" />],
  ["Star", <><path d="M6 1h12q3 0 3 3v12q0 3-3 3h-1v4l-5-4h-6q-3 0-3-3v-12q0-3 3-3z" fill="#1684ee" /><path d="M12 4v12M7 7l10 6M17 7l-10 6" stroke="#fff" strokeWidth="2.200" /></>],
  ["Sticky Notes", <><path d="M2 3h20v18h-20z" fill="#ffe500" /><path d="M14 21v-8h7z" fill="#333" /></>],
  ["Multisim", <g transform="translate(2 1)"><AppLogo /></g>],
  ["Ultiboard", <g transform="translate(2 1)"><AppLogo /></g>],
  ["OneNote", <><path d="M7 2h15v20h-15z" fill="#b45fe0" /><path d="M16 8h6v5h-6z" fill="#8e3cc0" /><path d="M2 5h13v14h-13z" fill="#7719aa" /><path d="M5.500 16v-8l6 8v-8" fill="none" stroke="#fff" strokeWidth="1.800" /></>],
  ["Music", <><path d="M2 1h20v22h-20z" fill="#e60012" /><path d="M16 5c-4-1-3 3-2 8 0 3-5 3-5 0s5-4 8-1c3 8-11 9-12 1 0-4 2-6 5-6" fill="none" stroke="#fff" strokeWidth="2" /></>],
  ["Explorer", <><path d="M3 3h7l2 2h9v16h-18z" fill="#f8d775" /><path d="M3 3h7l2 3h-9z" fill="#d8a030" /><path d="M6 22v-9h12v9h-3v-5h-6v5z" fill="#3c9fe6" /></>],
  ["Notepad", <><path d="M8 2l12 1-4 18-14-4z" fill="#8cc8d8" /><path d="M10 3l9 1-4 16-6-2z" fill="#5a9eb4" /><path d="M20 4l1 15-5 3z" fill="#ddd" /></>],
  ["Firefox", <><path d="M12 23c-12 0-12-13-8-19l3 4 6-7c1 3 3 3 4 4l2-1c6 9 1 19-7 19z" fill="#ff7139" /><path d="M12 22c6 0 10-6 7-13-2-2-5-4-5-7 6 5 9 12 5 17-2 2-4 3-7 3z" fill="#ffcb30" /><circle cx="12" cy="14" r="5" fill="#6e42d4" /></>],
  ["Chrome", <><circle cx="12" cy="12" r="10" fill="#fbc116" /><path d="M12 2a10 10 0 0 1 9 5.500h-9l-4 7-5-7.500a10 10 0 0 1 9-5z" fill="#e33b2e" /><path d="M3.200 7.200l5 8 4 2-2 5a10 10 0 0 1-7-15z" fill="#229e4c" /><circle cx="12" cy="12" r="4.500" fill="#4285f4" stroke="#fff" strokeWidth="1.500" /></>],
  ["WeChat", <><path d="M9 3c10 0 10 12 0 12l-5 2v-4c-6-4-2-10 5-10z" fill="#6ccb3c" /><path d="M16 10c8 0 8 9 4 10v2l-4-1c-8 0-8-11 0-11z" fill="#f2f2f2" /><path d="M6 7h1M11 7h1M13 14h1M18 14h1" stroke="#333" strokeWidth="1.500" /></>],
  ["Word", <><path d="M7 2h15v20h-15z" fill="#2b7cd3" /><path d="M7 2h15v6h-15z" fill="#41a5ee" /><path d="M7 15h15v7h-15z" fill="#103f91" /><path d="M2 5h13v14h-13z" fill="#185abd" /><path d="M4.500 8l2 8 2-7 2 7 2-8" fill="none" stroke="#fff" strokeWidth="1.500" /></>],
  ["Youdao", <><rect x="2" y="1" width="20" height="22" rx="3" fill="#d81e1e" /><text x="3" y="15" fontSize="9" fontWeight="bold" fill="#fff" className="font-['Noto_Sans_CJK_SC',sans-serif]">有道</text></>],
  ["Dictionary", <><rect x="2" y="1" width="20" height="22" rx="4" fill="#1183ee" /><circle cx="12" cy="11.500" r="6" fill="none" stroke="#fff" strokeWidth="2" /><path d="M16 16l4 2" stroke="#fff" strokeWidth="2" /><text x="8" y="14" fontSize="6" fill="#fff">Aa</text></>],
  ["OBS", <><circle cx="12" cy="12" r="10" fill="#222" stroke="#ccc" strokeWidth="1.500" /><path d="M12 12c-5-1-5-6-1-8M12 12c4-3 8 0 7 4M12 12c1 5-4 7-7 4" fill="none" stroke="#ccc" strokeWidth="2" /></>],
];

function TrayIcon({ d, className }: { d: string; className?: string }) {
  return (
    <span className={clsx("flex justify-center", className ?? "w-[30px]")}>
      <svg viewBox="0 0 20 20" className="h-5 w-5 overflow-visible"><path d={d} fill="none" stroke="#fff" strokeWidth="1.300" /></svg>
    </span>
  );
}

function Taskbar() {
  return (
    <div className="flex h-[38px] overflow-hidden bg-[#2f2e2a] font-['Open_Sans','Noto_Sans_CJK_SC',sans-serif] text-white">
      <div className="-ml-px flex">
        {apps.map(([name, art]) => (
          <button key={name} title={name} className={clsx("relative flex w-[46px] items-center justify-center", name === "Ultiboard" && "bg-[#5a5955]")}>
            <svg viewBox="0 0 24 24" className="h-6 w-[22px]">{art}</svg>
            {name === "Ultiboard" && <span className="absolute inset-x-0 bottom-0 h-[3px] bg-[#76b9ed]" />}
            {(name === "Dictionary" || name === "OBS") && <span className="absolute inset-x-[5px] bottom-0 h-[3px] bg-[#76b9ed]" />}
          </button>
        ))}
      </div>
      <div className="ml-auto flex items-center">
        <svg viewBox="0 0 12 22" className="h-[22px] w-3"><path d="M6 0c7 8 7 15 0 20-7-5-7-12 0-20z" fill="#fff" /><path d="M6 7v15M6 13l3-3M6 16l-3-3" stroke="#333" /></svg>
        <div className="relative ml-[3px] flex h-[22px] w-[41px] items-center border-2 border-white bg-[#222]">
          <span className="h-[16px] w-[22px] bg-[#1f8f45]" />
          <span className="absolute inset-0 text-center text-[12px] leading-[18px]">60%</span>
        </div>
        <span className="mr-[1px] h-[10px] w-[3px] bg-white" />
        <TrayIcon d="M2 14l8-8 8 8" />
        <span className="flex w-[30px] justify-center"><svg viewBox="0 0 14 20" className="h-5 w-[14px]"><rect x="3" y="0" width="8" height="14" rx="1" fill="#fff" /><path d="M1 10v5h12v-5M7 15v4M3 19.500h8" fill="none" stroke="#fff" strokeWidth="1.300" /></svg></span>
        <span className="flex w-[30px] justify-center"><svg viewBox="0 0 20 14" className="h-[14px] w-5"><path d="M5 3.500h13v9h-14v-4M18 6h2v4h-2M1 1v4h4v-4M3 5v4h3M2 0v2M5 0v2" fill="none" stroke="#fff" strokeWidth="1.200" /><path d="M7 5h5v6h-5z" fill="#fff" /></svg></span>
        <span className="flex w-[30px] justify-center"><svg viewBox="0 0 16 16" className="h-4 w-4"><path d="M1 15a14 14 0 0 1 14-14M4.500 15.500a10.500 10.500 0 0 1 10.500-10.500M8.500 15.500a6.500 6.500 0 0 1 6.500-6.500" fill="none" stroke="#bbb" strokeWidth="1.500" /><circle cx="14" cy="14" r="1.500" fill="#fff" /></svg></span>
        <TrayIcon d="M1 7h3l4-4v14l-4-4h-3zM12 7l6 6M18 7l-6 6" />
        <TrayIcon className="w-10" d="M2 14c-2-4 5-6 7-3s-4 8-6 6 6-11 10-14c4-2-4 10-5 13 1 2 6-6 8-8s4 0 3 2-4 1-4-1" />
        <span className="flex w-10 justify-center"><svg viewBox="0 0 30 18" className="h-[18px] w-[30px]"><rect x=".75" y=".75" width="28.500" height="16.500" fill="none" stroke="#fff" strokeWidth="1.500" /><path d="M4 5h22M4 9h22" stroke="#fff" strokeWidth="1.500" strokeDasharray="2 1.500" /><path d="M4 13h3M9 13h12M23 13h3" stroke="#fff" strokeWidth="1.500" /></svg></span>
        <span className="w-7 text-center text-[18px] leading-5">中</span>
        <span className="flex w-11 justify-center"><span className="h-[19px] w-[19px] bg-white text-center text-[15px] leading-[19px] text-black">拼</span></span>
        <span className="w-[58px] text-center text-[15px]">9:53</span>
        <span className="flex w-[52px] justify-center"><svg viewBox="0 0 20 20" className="h-5 w-5"><path d="M0 0h20v15h-12l-4 4v-4h-4z" fill="#fff" /><path d="M4 4h12M4 7.500h12M4 11h7" stroke="#333" strokeWidth="1.300" /><path d="M17 9a5 5 0 1 1-6 8c4 0 6-4 6-8z" fill="#fff" stroke="#333" /></svg></span>
        <span className="ml-[10px] h-[38px] w-[5px] border-l border-[#666]" />
      </div>
    </div>
  );
}

export default function App() {
  return (
    <div className="flex min-h-screen flex-col bg-[#f0f0f0] text-black">
      <TitleBar />
      <MenuBar />
      <Toolbars />
      <div className="flex flex-1 border-t border-[#696969]">
        <DesignToolbox />
        <Preview />
      </div>
      <SpreadsheetView />
      <StatusBar />
      <Taskbar />
    </div>
  );
}
